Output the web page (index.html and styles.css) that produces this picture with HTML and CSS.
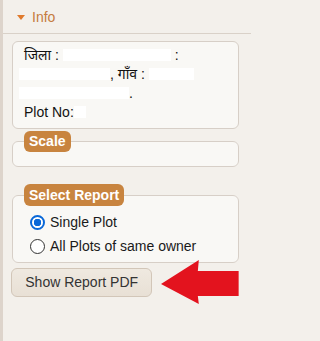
FILE: index.html
```html
<!DOCTYPE html>
<html>
<head>
<meta charset="utf-8">
<link rel="stylesheet" href="styles.css">
</head>
<body>
<div class="panel">
  <div class="header"><span class="caret"></span><span class="title">Info</span></div>
  <div class="content">
    <div class="info-box">
      <div class="line">जिला : <span class="redact r1"></span> :</div>
      <div class="line"><span class="redact r2"></span>, गाँव : <span class="redact r3"></span></div>
      <div class="line"><span class="redact r4"></span>.</div>
      <div class="line">Plot No:<span class="redact r5"></span></div>
    </div>
    <fieldset class="group scale">
      <legend>Scale</legend>
    </fieldset>
    <fieldset class="group report">
      <legend>Select Report</legend>
      <label class="opt"><input type="radio" name="rep" checked> Single Plot</label>
      <label class="opt"><input type="radio" name="rep"> All Plots of same owner</label>
    </fieldset>
    <div class="actions">
      <button class="btn">Show Report PDF</button>
      <svg class="arrow" width="78" height="44" viewBox="0 0 78 44"><polygon points="0,24 38,0 37,11 78,11 78,36 37,36 38,44" fill="#e3131e"/></svg>
    </div>
  </div>
</div>
</body>
</html>
```
FILE: styles.css
```css
html, body {
  margin: 0;
  padding: 0;
  background: #f3f0eb;
}
body {
  font-family: "Liberation Sans", Arial, "Noto Sans", sans-serif;
  font-size: 14px;
  color: #1a1a1a;
}
.panel {
  width: 251px;
  height: 341px;
  box-sizing: border-box;
  border-left: 3px solid #ddd4cb;
  background: #f3f0eb;
}
.header {
  height: 34px;
  border-bottom: 1px solid #d9d1c8;
  display: flex;
  align-items: center;
  padding-left: 14px;
  padding-top: 1px;
  box-sizing: border-box;
}
.caret {
  width: 0;
  height: 0;
  border-left: 4.5px solid transparent;
  border-right: 4.5px solid transparent;
  border-top: 5px solid #e07a2c;
  margin-top: 1px;
}
.title {
  color: #c57b40;
  font-size: 14px;
  margin-left: 7px;
}
.content {
  padding: 7px 12px 0 9px;
}
.info-box {
  border: 1px solid #d7cfc7;
  border-radius: 6px;
  background: #f9f8f5;
  padding: 4px 11px 6px;
  line-height: 19px;
  color: #111;
}
.line {
  height: 19px;
  white-space: nowrap;
}
.redact {
  display: inline-block;
  background: #fff;
  height: 12px;
  vertical-align: -1px;
}
.r1 { width: 108px; }
.r2 { width: 91px; margin-left: -5px; }
.r3 { width: 45px; }
.r4 { width: 110px; margin-left: -5px; }
.r5 { width: 12px; }
.group {
  margin: 2px 0 0;
  border: 1px solid #d7cfc7;
  border-radius: 6px;
  background: #f9f8f5;
  padding: 0 11px 14px;
}
.group legend {
  background: #c8843f;
  color: #fff;
  font-weight: bold;
  font-size: 14px;
  line-height: 21px;
  padding: 0 5px;
  border-radius: 6px;
}
.report {
  margin-top: 17px;
  padding: 4px 11px 4px 17px;
}
.report legend {
  line-height: 22px;
  margin-left: -6px;
}
.opt {
  display: flex;
  align-items: center;
  height: 24px;
  color: #1a1a1a;
}
.opt input {
  appearance: none;
  width: 15px;
  height: 15px;
  margin: 0 5px 0 0;
  border: 1px solid #333;
  border-radius: 50%;
  background: #fff;
  box-sizing: border-box;
}
.opt input:checked {
  border: 2px solid #0a68d8;
  background: radial-gradient(circle, #0a68d8 0 3.5px, #fff 4px);
}
.actions {
  display: flex;
  align-items: center;
  margin-top: -3px;
  margin-left: -1px;
}
.btn {
  width: 142px;
  height: 29px;
  border: 1px solid #d2c6b8;
  border-radius: 6px;
  background: linear-gradient(#efe9e0, #e8e0d5);
  font-family: "Liberation Sans", Arial, sans-serif;
  font-size: 14px;
  color: #333;
  padding: 0;
}
.arrow {
  margin-left: 9px;
}
```
